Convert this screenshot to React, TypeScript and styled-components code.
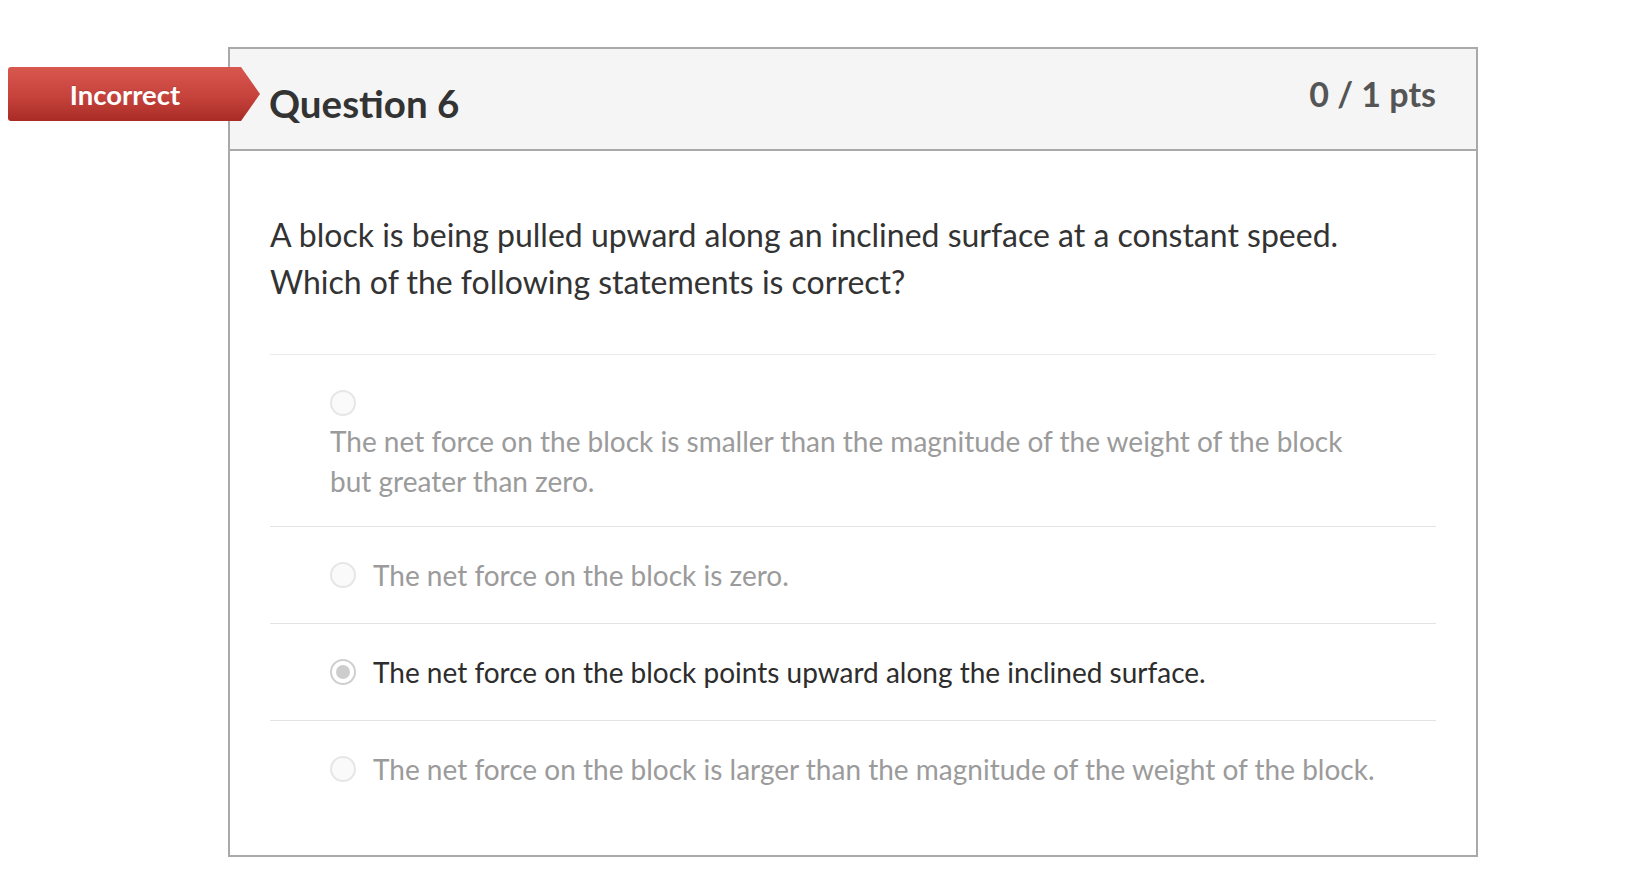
import React from 'react';
import styled, { createGlobalStyle } from 'styled-components';

const GlobalStyle = createGlobalStyle`
  html, body {
    margin: 0;
    padding: 0;
    background: #ffffff;
  }
  body {
    font-family: Lato, "Open Sans", "Liberation Sans", sans-serif;
    color: #333333;
  }
  * {
    box-sizing: border-box;
  }
`;

const Page = styled.div`
  padding: 47px 0 0 228px;
`;

const Card = styled.div`
  position: relative;
  width: 1250px;
  border: 2px solid #a9a9a9;
  background: #ffffff;
`;

// red ribbon that pokes into the header
const Badge = styled.div`
  position: absolute;
  left: -222px;
  top: 18px;
  width: 252px;
  height: 54px;
  padding-right: 18px;
  display: flex;
  align-items: center;
  justify-content: center;
  background: linear-gradient(to bottom, #d8574f 0%, #c6433c 55%, #a92b26 100%);
  border-radius: 3px 0 0 3px;
  clip-path: polygon(0 0, 233px 0, 100% 50%, 233px 100%, 0 100%);
  color: #ffffff;
  font-size: 27.5px;
  font-weight: 700;
  text-shadow: 0 -1px 0 rgba(0, 0, 0, 0.15);
`;

const Header = styled.div`
  display: flex;
  justify-content: space-between;
  align-items: flex-start;
  padding: 23px 40px 23px 39px;
  background: #f5f5f5;
  border-bottom: 2px solid #a9a9a9;
`;

const Title = styled.h2`
  margin: 8px 0 0;
  font-size: 38.5px;
  font-weight: 700;
  line-height: 1.2;
  color: #333333;
`;

const Points = styled.div`
  margin-top: 2px;
  font-size: 34px;
  font-weight: 700;
  line-height: 1.2;
  color: #555555;
`;

const Body = styled.div`
  padding: 60px 40px 38px;
`;

const QuestionText = styled.p`
  margin: 0 0 49px;
  font-size: 32px;
  line-height: 47px;
  color: #333333;
`;

const Answers = styled.div`
  border-top: 1px solid #ececec;
`;

const AnswerRow = styled.div<{ $stacked?: boolean }>`
  display: flex;
  flex-direction: ${(p) => (p.$stacked ? 'column' : 'row')};
  align-items: ${(p) => (p.$stacked ? 'flex-start' : 'center')};
  gap: ${(p) => (p.$stacked ? '5px' : '17px')};
  padding: ${(p) => (p.$stacked ? '35px 60px 25px' : '28px 20px 28px 60px')};
  border-bottom: 1px solid #e3e3e3;

  &:last-child {
    border-bottom: none;
  }
`;

const Radio = styled.span<{ $checked?: boolean }>`
  flex: none;
  position: relative;
  width: 26px;
  height: 26px;
  border-radius: 50%;
  border: 2px solid ${(p) => (p.$checked ? '#cfcfcf' : '#e6e6e6')};
  background: ${(p) => (p.$checked ? '#ffffff' : '#fafafa')};

  &::after {
    content: '';
    display: ${(p) => (p.$checked ? 'block' : 'none')};
    position: absolute;
    left: 4px;
    top: 4px;
    width: 14px;
    height: 14px;
    border-radius: 50%;
    background: #cdcdcd;
  }
`;

const AnswerText = styled.span<{ $selected?: boolean }>`
  font-size: 28px;
  line-height: 40px;
  color: ${(p) => (p.$selected ? '#2d2d2d' : '#9b9b9b')};
`;

const answers = [
  {
    text: 'The net force on the block is smaller than the magnitude of the weight of the block but greater than zero.',
    stacked: true,
    selected: false,
  },
  { text: 'The net force on the block is zero.', stacked: false, selected: false },
  {
    text: 'The net force on the block points upward along the inclined surface.',
    stacked: false,
    selected: true,
  },
  {
    text: 'The net force on the block is larger than the magnitude of the weight of the block.',
    stacked: false,
    selected: false,
  },
];

const App: React.FC = () => {
  return (
    <>
      <GlobalStyle />
      <Page>
        <Card>
          <Badge>Incorrect</Badge>
          <Header>
            <Title>Question 6</Title>
            <Points>0 / 1 pts</Points>
          </Header>
          <Body>
            <QuestionText>
              A block is being pulled upward along an inclined surface at a constant speed.
              <br />
              Which of the following statements is correct?
            </QuestionText>
            <Answers>
              {answers.map((a, i) => (
                <AnswerRow key={i} $stacked={a.stacked}>
                  <Radio $checked={a.selected} />
                  <AnswerText $selected={a.selected}>{a.text}</AnswerText>
                </AnswerRow>
              ))}
            </Answers>
          </Body>
        </Card>
      </Page>
    </>
  );
};

export default App;
